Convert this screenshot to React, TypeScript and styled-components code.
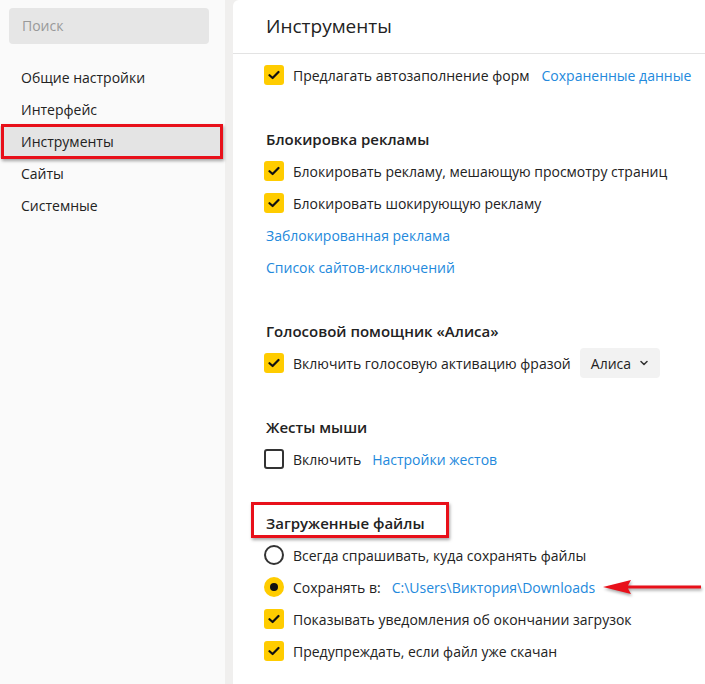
import styled, { createGlobalStyle } from 'styled-components'

const GlobalStyle = createGlobalStyle`
  html, body {
    margin: 0;
    padding: 0;
    background: #f0efee;
  }
  body {
    font-family: 'Open Sans', 'Noto Sans', sans-serif;
    color: #222;
  }
`

const Page = styled.div`
  display: flex;
  width: 705px;
  height: 684px;
  overflow: hidden;
  background: #f0efee;
`

const Sidebar = styled.aside`
  width: 225px;
  flex-shrink: 0;
  background: #fafafa;
  padding-top: 8px;
  box-sizing: border-box;
`

const Search = styled.div`
  margin-left: 9px;
  width: 200px;
  height: 36px;
  border-radius: 4px;
  background: #e6e6e6;
  color: #999;
  font-size: 14px;
  line-height: 36px;
  padding-left: 13px;
  box-sizing: border-box;
`

const Nav = styled.nav`
  display: flex;
  flex-direction: column;
  margin-top: 18px;
`

const NavItem = styled.div<{ active?: boolean }>`
  position: relative;
  height: 32px;
  line-height: 32px;
  padding-left: 21px;
  font-size: 14px;
  color: #222;
  background: ${({ active }) => (active ? '#e4e4e4' : 'transparent')};
  margin-right: ${({ active }) => (active ? '4px' : '0')};

  ${({ active }) =>
    active &&
    `
    &::after {
      content: '';
      position: absolute;
      left: 1px;
      right: -2px;
      top: -2px;
      bottom: -1px;
      border: 3px solid #e8101a;
      box-shadow: 1px 2px 3px rgba(0, 0, 0, 0.35);
    }
  `}
`

const Main = styled.main`
  flex: 1;
  margin-left: 8px;
  background: #fff;
  border-top-left-radius: 6px;
  position: relative;
`

const Header = styled.header`
  height: 53px;
  border-bottom: 1px solid #e3e3e3;
  padding-left: 33px;
  font-size: 19px;
  line-height: 53px;
  color: #222;
`

const Content = styled.div`
  padding: 5px 0 0 31px;
`

const Section = styled.section`
  & + & {
    margin-top: 32px;
  }
`

const Heading = styled.div<{ marked?: boolean }>`
  position: relative;
  display: inline-block;
  height: 32px;
  line-height: 32px;
  margin-left: 2px;
  font-size: 15px;
  font-weight: 600;
  color: #222;

  ${({ marked }) =>
    marked &&
    `
    &::after {
      content: '';
      position: absolute;
      left: -15px;
      right: -24px;
      top: -5px;
      bottom: 1px;
      border: 3px solid #e8101a;
      box-shadow: 1px 2px 3px rgba(0, 0, 0, 0.35);
    }
  `}
`

const Row = styled.div`
  display: flex;
  align-items: center;
  height: 32px;
  font-size: 14px;
  color: #222;
  white-space: nowrap;
`

const Box = styled.span<{ checked?: boolean }>`
  width: 20px;
  height: 20px;
  box-sizing: border-box;
  border-radius: 3px;
  margin-right: 9px;
  flex-shrink: 0;
  display: flex;
  align-items: center;
  justify-content: center;
  background: ${({ checked }) => (checked ? '#ffcc00' : '#fff')};
  border: ${({ checked }) => (checked ? 'none' : '2px solid #333')};
`

const Radio = styled.span<{ checked?: boolean }>`
  width: 20px;
  height: 20px;
  box-sizing: border-box;
  border-radius: 50%;
  margin-right: 9px;
  flex-shrink: 0;
  display: flex;
  align-items: center;
  justify-content: center;
  background: ${({ checked }) => (checked ? '#ffcc00' : '#fff')};
  border: ${({ checked }) => (checked ? 'none' : '2px solid #333')};

  &::after {
    content: '';
    display: ${({ checked }) => (checked ? 'block' : 'none')};
    width: 8px;
    height: 8px;
    border-radius: 50%;
    background: #111;
  }
`

const Link = styled.span<{ gap?: number }>`
  color: #2389dc;
  margin-left: ${({ gap }) => (gap !== undefined ? gap : 12)}px;
`

const LinkRow = styled(Row)`
  margin-left: 2px;
  color: #2389dc;
`

const Select = styled.div`
  display: flex;
  align-items: center;
  height: 30px;
  margin-left: 9px;
  padding: 0 12px 0 11px;
  border-radius: 4px;
  background: #f2f2f2;
  color: #222;
  gap: 9px;
`

const Arrow = styled.svg`
  position: absolute;
  left: 368px;
  top: 574px;
  filter: drop-shadow(1px 2px 1.5px rgba(0, 0, 0, 0.35));
`

function Check() {
  return (
    <svg width="12" height="10" viewBox="0 0 12 10">
      <path d="M1.5 5.2 L4.6 8 L10.5 2" fill="none" stroke="#111" strokeWidth="2.2" strokeLinecap="round" strokeLinejoin="round" />
    </svg>
  )
}

function Checkbox({ checked }: { checked?: boolean }) {
  return <Box checked={checked}>{checked && <Check />}</Box>
}

function Chevron() {
  return (
    <svg width="8" height="6" viewBox="0 0 8 6">
      <path d="M1 1.5 L4 4.5 L7 1.5" fill="none" stroke="#333" strokeWidth="1.5" strokeLinecap="round" strokeLinejoin="round" />
    </svg>
  )
}

const nav = ['Общие настройки', 'Интерфейс', 'Инструменты', 'Сайты', 'Системные']

export default function App() {
  return (
    <Page>
      <GlobalStyle />
      <Sidebar>
        <Search>Поиск</Search>
        <Nav>
          {nav.map((item) => (
            <NavItem key={item} active={item === 'Инструменты'}>
              {item}
            </NavItem>
          ))}
        </Nav>
      </Sidebar>
      <Main>
        <Header>Инструменты</Header>
        <Content>
          <Section>
            <Row>
              <Checkbox checked />
              Предлагать автозаполнение форм
              <Link>Сохраненные данные</Link>
            </Row>
          </Section>

          <Section>
            <Heading>Блокировка рекламы</Heading>
            <Row>
              <Checkbox checked />
              Блокировать рекламу, мешающую просмотру страниц
            </Row>
            <Row>
              <Checkbox checked />
              Блокировать шокирующую рекламу
            </Row>
            <LinkRow>Заблокированная реклама</LinkRow>
            <LinkRow>Список сайтов-исключений</LinkRow>
          </Section>

          <Section>
            <Heading>Голосовой помощник «Алиса»</Heading>
            <Row>
              <Checkbox checked />
              Включить голосовую активацию фразой
              <Select>
                Алиса
                <Chevron />
              </Select>
            </Row>
          </Section>

          <Section>
            <Heading>Жесты мыши</Heading>
            <Row>
              <Checkbox />
              Включить
              <Link gap={11}>Настройки жестов</Link>
            </Row>
          </Section>

          <Section>
            <Heading marked>Загруженные файлы</Heading>
            <Row>
              <Radio />
              Всегда спрашивать, куда сохранять файлы
            </Row>
            <Row>
              <Radio checked />
              Сохранять в:
              <Link gap={11}>C:\Users\Виктория\Downloads</Link>
            </Row>
            <Row>
              <Checkbox checked />
              Показывать уведомления об окончании загрузок
            </Row>
            <Row>
              <Checkbox checked />
              Предупреждать, если файл уже скачан
            </Row>
          </Section>
        </Content>
        <Arrow width="104" height="26" viewBox="0 0 104 26">
          <path d="M2 13 L30 6 L27 11.5 L100 11.5 L100 14.5 L27 14.5 L30 20 Z" fill="#e8101a" />
        </Arrow>
      </Main>
    </Page>
  )
}
